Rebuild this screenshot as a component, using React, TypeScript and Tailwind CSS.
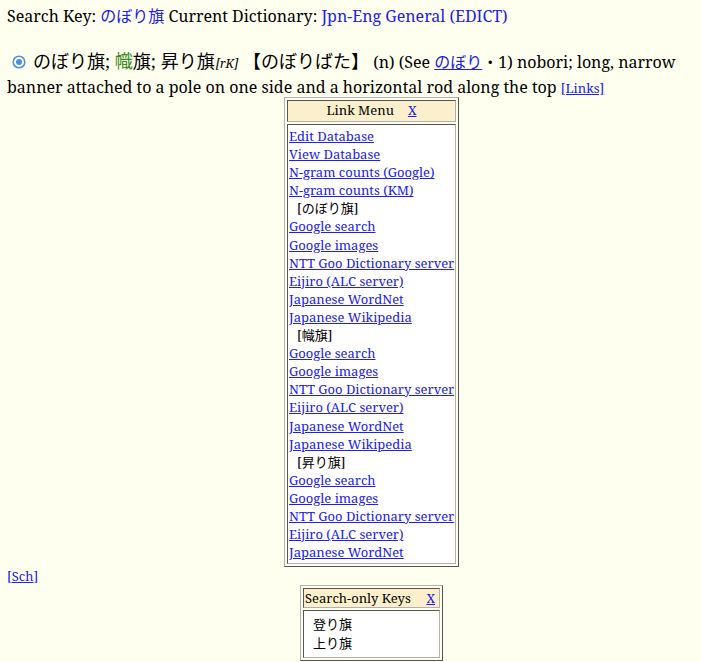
import React from "react";

const serif = "font-['Noto_Serif','DejaVu_Serif','Noto_Sans_CJK_JP',serif]";

type MenuRow = { kind: "link" | "label"; text: string };

const groupLinks = [
  "Google search",
  "Google images",
  "NTT Goo Dictionary server",
  "Eijiro (ALC server)",
  "Japanese WordNet",
  "Japanese Wikipedia",
];

const menuRows: MenuRow[] = [
  { kind: "link", text: "Edit Database" },
  { kind: "link", text: "View Database" },
  { kind: "link", text: "N-gram counts (Google)" },
  { kind: "link", text: "N-gram counts (KM)" },
  { kind: "label", text: "[のぼり旗]" },
  ...groupLinks.map((t) => ({ kind: "link" as const, text: t })),
  { kind: "label", text: "[幟旗]" },
  ...groupLinks.map((t) => ({ kind: "link" as const, text: t })),
  { kind: "label", text: "[昇り旗]" },
  ...groupLinks.slice(0, 5).map((t) => ({ kind: "link" as const, text: t })),
];

const outerBox =
  "border border-t-[#b0b0b0] border-l-[#b0b0b0] border-r-[#555] border-b-[#555] p-[2px] flex flex-col gap-[2px]";
const innerCell =
  "border border-t-[#555] border-l-[#555] border-r-[#b0b0b0] border-b-[#b0b0b0]";

function Radio() {
  return (
    <svg width="14" height="14" viewBox="0 0 14 14" className="inline-block mr-[7px] align-[-1px]">
      <circle cx="7" cy="7" r="5.8" fill="#fff" stroke="#4a8fe0" strokeWidth="1.6" />
      <circle cx="7" cy="7" r="3" fill="#4a8fe0" />
    </svg>
  );
}

export default function App() {
  return (
    <div className={`min-h-screen bg-[#ffffef] text-black ${serif}`}>
      <div className="px-[7px] pt-[5px]">
        <div className="text-[16px] leading-[22px]">
          Search Key: <span className="text-[#2020ee]">のぼり旗</span> Current Dictionary:{" "}
          <span className="text-[#2020ee]">Jpn-Eng General (EDICT)</span>
        </div>

        <div className="mt-[23px] text-[16px] leading-[25px]">
          <span className="pl-[5px]">
            <Radio />
          </span>
          <span className="text-[18px] leading-none">
            のぼり旗; <span className="text-[#3c8a1e]">幟</span>旗; 昇り旗
          </span>
          <i className="text-[12px] leading-none ml-[1px]">[rK]</i>
          <span className="text-[18px] leading-none"> 【のぼりばた】</span> (n) (See{" "}
          <a href="#" className="text-[#2020ee] underline leading-none">
            のぼり
          </a>
          <span className="leading-none">・</span>1) nobori; long, narrow banner attached to a pole on one
          side and a horizontal rod along the top{" "}
          <a href="#" className="text-[13px] text-[#2020ee] underline leading-none">
            [Links]
          </a>
        </div>
      </div>

      <div className="flex justify-center pl-[42px] -mt-[3px]">
        <div className={`${outerBox} w-[175px]`}>
          <div className={`${innerCell} bg-[#fcf0cc] h-[22px] flex items-center justify-center text-[13px]`}>
            Link Menu
            <a href="#" className="ml-[14px] text-[#2020ee] underline">
              X
            </a>
          </div>
          <div className={`${innerCell} bg-white px-[1px] pt-[2px] pb-[2px] text-[13px] leading-[18.1px]`}>
            {menuRows.map((r, i) =>
              r.kind === "link" ? (
                <div key={i}>
                  <a href="#" className="text-[#2020ee] underline whitespace-nowrap">
                    {r.text}
                  </a>
                </div>
              ) : (
                <div key={i} className="pl-[8px]">
                  {r.text}
                </div>
              )
            )}
          </div>
        </div>
      </div>

      <div className="px-[7px] mt-0 text-[13px] leading-[18px] text-[#2020ee]">
        [<a href="#" className="underline">Sch</a>]
      </div>

      <div className="flex justify-center pl-[42px] mt-0 pb-[4px]">
        <div className={`${outerBox} w-[143px]`}>
          <div className={`${innerCell} bg-[#fcf0cc] h-[20px] flex items-center justify-between px-[1px] text-[13px]`}>
            <span>Search-only Keys</span>
            <a href="#" className="text-[#2020ee] underline mr-[3px]">
              X
            </a>
          </div>
          <div className={`${innerCell} bg-white pl-[9px] py-[4px] text-[13px] leading-[19px]`}>
            <div>登り旗</div>
            <div>上り旗</div>
          </div>
        </div>
      </div>
    </div>
  );
}
